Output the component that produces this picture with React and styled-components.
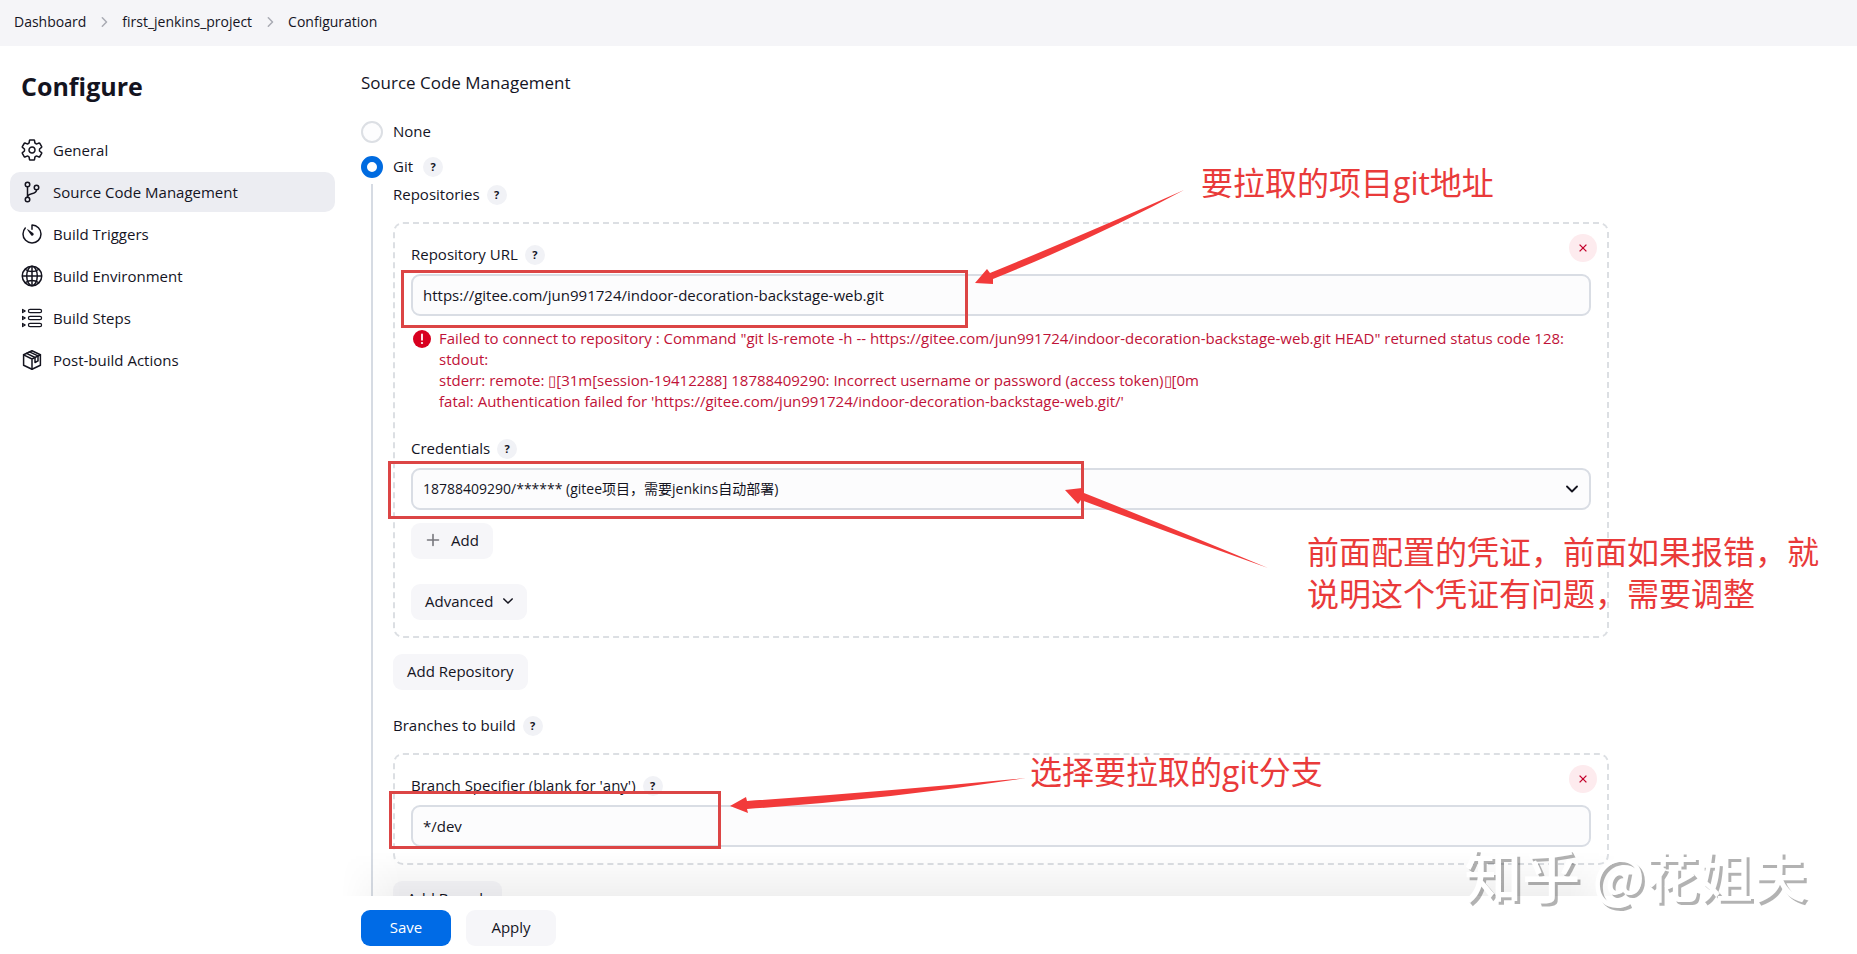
import React, { useState } from 'react';
import styled, { createGlobalStyle } from 'styled-components';
import {
  IoSettingsOutline,
  IoGitBranchOutline,
  IoTimerOutline,
  IoGlobeOutline,
} from 'react-icons/io5';

const GlobalStyle = createGlobalStyle`
  *, *::before, *::after { box-sizing: border-box; }
  body {
    margin: 0;
    background: #fff;
    color: #14141f;
    font: 15px/22px "Open Sans", "Noto Sans CJK SC", sans-serif;
  }
  button, input, select { font: inherit; color: inherit; }
`;

const Shell = styled.div`
  display: flex;
  flex-direction: column;
  height: 100vh;
  overflow: hidden;
`;

const Breadcrumbs = styled.nav`
  flex: none;
  display: flex;
  align-items: center;
  gap: 13px;
  height: 46px;
  padding: 0 14px 2px;
  background: #f5f5f8;
`;

const Crumb = styled.a`
  font-size: 14px;
  color: inherit;
  text-decoration: none;
`;

const Body = styled.div`
  flex: 1;
  min-height: 0;
  display: flex;
`;

const Sidebar = styled.aside`
  flex: none;
  width: 361px;
  padding: 22px 26px 0 10px;
`;

const PageTitle = styled.h1`
  margin: 0 0 26px 11px;
  font-size: 25px;
  line-height: 36px;
  font-weight: 700;
`;

const NavList = styled.div`
  display: flex;
  flex-direction: column;
  gap: 2px;
`;

const NavItem = styled.a`
  display: flex;
  align-items: center;
  gap: 9px;
  height: 40px;
  padding: 0 10px;
  border-radius: 10px;
  background: ${(p) => (p.$active ? '#ecedf2' : 'transparent')};
  color: inherit;
  text-decoration: none;
  svg { flex: none; width: 24px; height: 24px; }
`;

const Main = styled.main`
  flex: 1;
  min-width: 0;
  display: flex;
  flex-direction: column;
`;

const Scroller = styled.div`
  position: relative;
  flex: 1;
  min-height: 0;
  overflow: hidden;
`;

const Form = styled.div`
  display: flex;
  flex-direction: column;
  max-width: 1248px;
  padding-top: 25px;
`;

const SectionTitle = styled.h2`
  margin: 0 0 26px;
  font-size: 17px;
  line-height: 24px;
  font-weight: 400;
`;

const RadioRow = styled.div`
  display: flex;
  align-items: center;
  gap: 10px;
  height: 22px;
  margin-bottom: ${(p) => (p.$last ? 6 : 13)}px;
  label { padding-bottom: 2px; }
`;

const Radio = styled.input`
  appearance: none;
  flex: none;
  width: 22px;
  height: 22px;
  margin: 0;
  border: 2px solid #dcdfe4;
  border-radius: 50%;
  background: #fdfdfe;
  &:checked { border: 6px solid #006be0; background: #fff; }
`;

const Nested = styled.div`
  display: flex;
  flex-direction: column;
  align-items: flex-start;
  margin-left: 10px;
  padding-left: 20px;
  border-left: 2px solid #d6dbe3;
`;

const LabelRow = styled.div`
  display: flex;
  align-items: center;
  gap: 7px;
  height: 22px;
  margin-top: ${(p) => p.$top || 0}px;
  label, span { padding-bottom: 2px; }
`;

const HelpButton = styled.button`
  display: flex;
  align-items: center;
  justify-content: center;
  width: 20px;
  height: 20px;
  padding: 0;
  border: 0;
  border-radius: 50%;
  background: #f1f2f6;
  font-size: 11px;
  line-height: 20px;
  font-weight: 700;
`;

const Chunk = styled.div`
  position: relative;
  align-self: stretch;
  display: flex;
  flex-direction: column;
  align-items: flex-start;
  margin: 16px 0;
  padding: 20px 16px 16px;
  border: 2px dashed #dcdfe3;
  border-radius: 10px;
`;

const DeleteButton = styled.button`
  position: absolute;
  top: 10px;
  right: 10px;
  display: flex;
  align-items: center;
  justify-content: center;
  width: 28px;
  height: 28px;
  padding: 0;
  border: 0;
  border-radius: 50%;
  background: #fdebee;
  color: #c4002b;
`;

const TextInput = styled.input`
  align-self: stretch;
  height: 42px;
  margin-top: 8px;
  padding: 0 10px 1px;
  border: 2px solid #d9dde4;
  border-radius: 9px;
  background: #fcfcfd;
`;

const SelectWrap = styled.div`
  align-self: stretch;
  display: grid;
  align-items: center;
  margin-top: 8px;
  > * { grid-area: 1 / 1; }
  svg { justify-self: end; margin-right: 13px; pointer-events: none; }
`;

const Select = styled.select`
  appearance: none;
  width: 100%;
  height: 42px;
  padding: 0 36px 0 10px;
  border: 2px solid #d9dde4;
  border-radius: 9px;
  background: #fcfcfd;
  font-size: 14px;
`;

const ErrorMessage = styled.div`
  display: flex;
  gap: 8px;
  margin: 12px 0 26px;
  padding-left: 2px;
  color: #bf1238;
  line-height: 21px;
  svg { flex: none; margin-top: 2px; }
`;

const ErrorText = styled.div`
  white-space: pre-line;
`;

const Button = styled.button`
  display: flex;
  align-items: center;
  justify-content: center;
  gap: ${(p) => p.$gap || 0}px;
  min-width: ${(p) => (p.$wide ? 90 : 0)}px;
  height: 36px;
  margin-top: ${(p) => p.$top || 0}px;
  padding: 0 14px 2px;
  border: 0;
  border-radius: 9px;
  background: ${(p) => (p.$primary ? '#006be6' : '#f6f6f9')};
  color: ${(p) => (p.$primary ? '#fff' : '#14141f')};
`;

const Footer = styled.div`
  position: relative;
  flex: none;
  display: flex;
  gap: 15px;
  max-width: 1248px;
  height: 58px;
  padding-top: 14px;
  background: #fff;
  &::before {
    content: '';
    position: absolute;
    bottom: 100%;
    left: -20px;
    right: -20px;
    height: 44px;
    background: linear-gradient(to top, rgba(0, 0, 0, 0.06), transparent);
    mask-image: linear-gradient(to right, transparent, #000 60px, #000 calc(100% - 60px), transparent);
    pointer-events: none;
  }
`;

const Annotations = styled.div`
  position: absolute;
  inset: 0;
  pointer-events: none;
`;

const Arrows = styled.svg`
  position: absolute;
  top: 0;
  left: 0;
`;

const Frame = styled.div`
  position: absolute;
  left: ${(p) => p.$x}px;
  top: ${(p) => p.$y}px;
  width: ${(p) => p.$w}px;
  height: 58px;
  border: 3px solid #dc4545;
`;

const Note = styled.div`
  position: absolute;
  left: ${(p) => p.$x}px;
  top: ${(p) => p.$y}px;
  color: #e93a3a;
  font-size: 32px;
  line-height: 42px;
  white-space: nowrap;
`;

const Watermark = styled.div`
  position: fixed;
  right: 50px;
  bottom: 45px;
  color: #fff;
  font: 500 54px/68px "Noto Sans CJK SC", sans-serif;
  text-shadow: 3px 3px 0 rgba(0, 0, 0, 0.3);
  white-space: nowrap;
  pointer-events: none;
`;

const WatermarkBrand = styled.span`
  font-size: 58px;
`;

const StepsIcon = () => (
  <svg viewBox="0 0 24 24" fill="none" stroke="currentColor" strokeWidth="1.2" strokeLinejoin="round" aria-hidden="true">
    {[5, 12, 19].map((y) => (
      <g key={y}>
        <path d={`M2.6 ${y - 1.6}l2.6 1.6-2.6 1.6z`} />
        <rect x="8.4" y={y - 1.7} width="13.2" height="3.4" rx="1.7" />
      </g>
    ))}
  </svg>
);

const PackageIcon = () => (
  <svg viewBox="0 0 24 24" fill="none" stroke="currentColor" strokeWidth="1.5" strokeLinejoin="round" strokeLinecap="round" aria-hidden="true">
    <path d="M12 2.8l8.4 4v10.4L12 21.2l-8.4-4V6.8z" />
    <path d="M3.6 6.8L12 11l8.4-4.2M12 11v10.2" />
    <path d="M6.6 5.4L15 9.5v5l3-1.6v-5L9.4 3.9" />
  </svg>
);

const Chevron = ({ right, size = 12, color = '#14141f' }) => (
  <svg width={size} height={size} viewBox="0 0 12 12" fill="none" stroke={color} strokeWidth="1.8" strokeLinecap="round" strokeLinejoin="round" aria-hidden="true">
    <path d={right ? 'M4 1l5 5-5 5' : 'M1 3.5l5 5 5-5'} />
  </svg>
);

const Plus = () => (
  <svg width="16" height="16" viewBox="0 0 16 16" stroke="#77777d" strokeWidth="1.6" strokeLinecap="round" aria-hidden="true">
    <path d="M8 2.5v11M2.5 8h11" />
  </svg>
);

const AlertIcon = () => (
  <svg width="18" height="18" viewBox="0 0 18 18" aria-hidden="true">
    <circle cx="9" cy="9" r="9" fill="#d8001f" />
    <path d="M9 4.4v5.4" stroke="#fff" strokeWidth="1.8" strokeLinecap="round" />
    <circle cx="9" cy="13" r="1.1" fill="#fff" />
  </svg>
);

const Help = ({ topic }) => (
  <HelpButton type="button" aria-label={`Help for ${topic}`}>?</HelpButton>
);

const Delete = () => (
  <DeleteButton type="button" aria-label="Delete">
    <svg width="8" height="8" viewBox="0 0 8 8" stroke="currentColor" strokeWidth="1.3" aria-hidden="true">
      <path d="M.6.6l6.8 6.8M7.4.6L.6 7.4" />
    </svg>
  </DeleteButton>
);

const navItems = [
  { label: 'General', Icon: IoSettingsOutline },
  { label: 'Source Code Management', Icon: IoGitBranchOutline, active: true },
  { label: 'Build Triggers', Icon: IoTimerOutline },
  { label: 'Build Environment', Icon: IoGlobeOutline },
  { label: 'Build Steps', Icon: StepsIcon },
  { label: 'Post-build Actions', Icon: PackageIcon },
];

const errorText = `Failed to connect to repository : Command "git ls-remote -h -- https://gitee.com/jun991724/indoor-decoration-backstage-web.git HEAD" returned status code 128:
stdout:
stderr: remote: ▯[31m[session-19412288] 18788409290: Incorrect username or password (access token)▯[0m
fatal: Authentication failed for 'https://gitee.com/jun991724/indoor-decoration-backstage-web.git/'`;

export default function App() {
  const [scm, setScm] = useState('git');
  return (
    <Shell>
      <GlobalStyle />
      <Breadcrumbs aria-label="Breadcrumb">
        <Crumb href="#dashboard">Dashboard</Crumb>
        <Chevron right size={10} color="#a9abb3" />
        <Crumb href="#project">first_jenkins_project</Crumb>
        <Chevron right size={10} color="#a9abb3" />
        <Crumb href="#configuration">Configuration</Crumb>
      </Breadcrumbs>
      <Body>
        <Sidebar>
          <PageTitle>Configure</PageTitle>
          <NavList>
            {navItems.map(({ label, Icon, active }) => (
              <NavItem key={label} href="#section" $active={active}>
                <Icon />
                {label}
              </NavItem>
            ))}
          </NavList>
        </Sidebar>
        <Main>
          <Scroller>
            <Form>
              <SectionTitle>Source Code Management</SectionTitle>
              <RadioRow>
                <Radio type="radio" name="scm" id="scm-none" checked={scm === 'none'} onChange={() => setScm('none')} />
                <label htmlFor="scm-none">None</label>
              </RadioRow>
              <RadioRow $last>
                <Radio type="radio" name="scm" id="scm-git" checked={scm === 'git'} onChange={() => setScm('git')} />
                <label htmlFor="scm-git">Git</label>
                <Help topic="Git" />
              </RadioRow>
              <Nested>
                <LabelRow>
                  <span>Repositories</span>
                  <Help topic="Repositories" />
                </LabelRow>
                <Chunk>
                  <Delete />
                  <LabelRow>
                    <label htmlFor="repo-url">Repository URL</label>
                    <Help topic="Repository URL" />
                  </LabelRow>
                  <TextInput id="repo-url" defaultValue="https://gitee.com/jun991724/indoor-decoration-backstage-web.git" />
                  <ErrorMessage>
                    <AlertIcon />
                    <ErrorText>{errorText}</ErrorText>
                  </ErrorMessage>
                  <LabelRow>
                    <label htmlFor="credentials">Credentials</label>
                    <Help topic="Credentials" />
                  </LabelRow>
                  <SelectWrap>
                    <Select id="credentials">
                      <option>18788409290/****** (gitee项目，需要jenkins自动部署)</option>
                    </Select>
                    <Chevron />
                  </SelectWrap>
                  <Button type="button" $top={13} $gap={10}>
                    <Plus />
                    Add
                  </Button>
                  <Button type="button" $top={25} $gap={10}>
                    Advanced
                    <Chevron size={10} />
                  </Button>
                </Chunk>
                <Button type="button">Add Repository</Button>
                <LabelRow $top={25}>
                  <span>Branches to build</span>
                  <Help topic="Branches to build" />
                </LabelRow>
                <Chunk>
                  <Delete />
                  <LabelRow>
                    <label htmlFor="branch">Branch Specifier (blank for 'any')</label>
                    <Help topic="Branch Specifier" />
                  </LabelRow>
                  <TextInput id="branch" defaultValue="*/dev" />
                </Chunk>
                <Button type="button">Add Branch</Button>
              </Nested>
            </Form>
            <Annotations>
              <Frame $x={40} $y={224} $w={567} />
              <Frame $x={27} $y={415} $w={696} />
              <Frame $x={28} $y={745} $w={332} />
              <Arrows width="1000" height="800" viewBox="361 46 1000 800" fill="#f23a3a" aria-hidden="true">
                <path d="M975 283L987 269L990 273Q1090 232 1184 190Q1095 238 993 279L993 284Z" />
                <path d="M1065 490L1082 488L1084 493Q1175 529 1268 568Q1175 535 1081 500L1078 504Z" />
                <path d="M730 806L746 797L747 801Q880 792 1026 778Q890 799 747 809L748 813Z" />
              </Arrows>
              <Note $x={840} $y={116}>要拉取的项目git地址</Note>
              <Note $x={946} $y={485}>
                前面配置的凭证，前面如果报错，就
                <br />
                说明这个凭证有问题，需要调整
              </Note>
              <Note $x={669} $y={705}>选择要拉取的git分支</Note>
            </Annotations>
          </Scroller>
          <Footer>
            <Button type="button" $primary $wide>Save</Button>
            <Button type="button" $wide>Apply</Button>
          </Footer>
        </Main>
      </Body>
      <Watermark><WatermarkBrand>知乎</WatermarkBrand> @花姐夫</Watermark>
    </Shell>
  );
}
